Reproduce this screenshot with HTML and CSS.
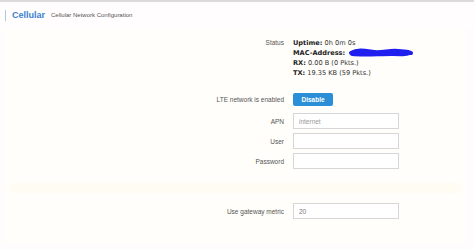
FILE: index.html
```html
<!DOCTYPE html>
<html>
<head>
<meta charset="utf-8">
<link rel="stylesheet" href="styles.css">
</head>
<body>
<div class="topbar"></div>
<div class="header">
  <span class="title">Cellular</span>
  <span class="subtitle">Cellular Network Configuration</span>
</div>
<div class="panel">
  <div class="section first">
    <div class="row status-row">
      <div class="label">Status</div>
      <div class="status">
        <div><b>Uptime:</b> 0h 0m 0s</div>
        <div><b>MAC-Address:</b> <svg class="redact" width="66" height="11" viewBox="0 0 66 11"><path d="M3 6 C10 2, 18 4, 26 5 S42 3, 50 4 S59 4, 63 6 M4 7 C16 8, 30 7, 44 7 S57 8, 62 6" fill="none" stroke="#1f1fef" stroke-width="4" stroke-linecap="round"/></svg></div>
        <div><b>RX:</b> 0.00 B (0 Pkts.)</div>
        <div><b>TX:</b> 19.35 KB (59 Pkts.)</div>
      </div>
    </div>
    <div class="row lte-row">
      <div class="label">LTE network is enabled</div>
      <div><button class="btn">Disable</button></div>
    </div>
    <div class="row field-row apn-row">
      <div class="label">APN</div>
      <div><input class="field" placeholder="internet"></div>
    </div>
    <div class="row field-row">
      <div class="label">User</div>
      <div><input class="field"></div>
    </div>
    <div class="row field-row">
      <div class="label">Password</div>
      <div><input class="field" type="password"></div>
    </div>
  </div>
  <div class="band"></div>
  <div class="section second">
    <div class="row field-row">
      <div class="label">Use gateway metric</div>
      <div><input class="field value" value="20"></div>
    </div>
  </div>
</div>
</body>
</html>
```
FILE: styles.css
```css
html, body {
  margin: 0;
  padding: 0;
}
body {
  background: #fefcfc;
  font-family: "Liberation Sans", Arial, sans-serif;
  width: 474px;
  height: 249px;
  overflow: hidden;
}
.topbar {
  height: 2px;
  background: #dcdadc;
}
.header {
  height: 27px;
  display: flex;
  align-items: center;
  padding-left: 5px;
  background: #fffdfd;
}
.title {
  border-left: 1px solid #b5c6da;
  padding-left: 6px;
  height: 11px;
  line-height: 11px;
  font-size: 9px;
  font-weight: bold;
  color: #3d7fcf;
}
.subtitle {
  margin-left: 6px;
  font-size: 6px;
  color: #555;
  line-height: 11px;
}
.panel {
  margin: 0 8px 6px 5px;
  background: #fffefa;
  height: 214px;
}
.section.first {
  padding-top: 9px;
  height: 145px;
}
.row {
  display: grid;
  grid-template-columns: 279px 1fr;
  column-gap: 9px;
  align-items: center;
}
.label {
  text-align: right;
  font-size: 6.5px;
  color: #555;
}
.status-row {
  align-items: start;
}
.status-row .label {
  line-height: 10px;
}
.status {
  font-family: "DejaVu Sans", Verdana, sans-serif;
  font-size: 6.6px;
  line-height: 10px;
  color: #333;
}
.status b {
  color: #222;
}
.redact {
  vertical-align: middle;
  margin-left: 1px;
  margin-top: -2px;
}
.lte-row {
  margin-top: 15px;
}
.btn {
  display: block;
  width: 40px;
  height: 13px;
  padding: 0;
  border: none;
  border-radius: 2px;
  background: #2b8fd8;
  color: #fff;
  font-family: "Liberation Sans", Arial, sans-serif;
  font-weight: bold;
  font-size: 6.5px;
}
.field-row {
  margin-top: 4px;
}
.apn-row {
  margin-top: 7px;
}
.field {
  display: block;
  box-sizing: border-box;
  width: 106px;
  height: 16px;
  margin: 0;
  padding: 0 5px;
  border: 1px solid #d6d6d6;
  background: #fff;
  font-family: "Liberation Sans", Arial, sans-serif;
  font-size: 6.5px;
  color: #777;
  outline: none;
}
.field::placeholder {
  color: #999;
}
.band {
  height: 10px;
  background: #fffdf3;
  margin: 0 4px;
}
.section.second {
  padding-top: 6px;
}
```
